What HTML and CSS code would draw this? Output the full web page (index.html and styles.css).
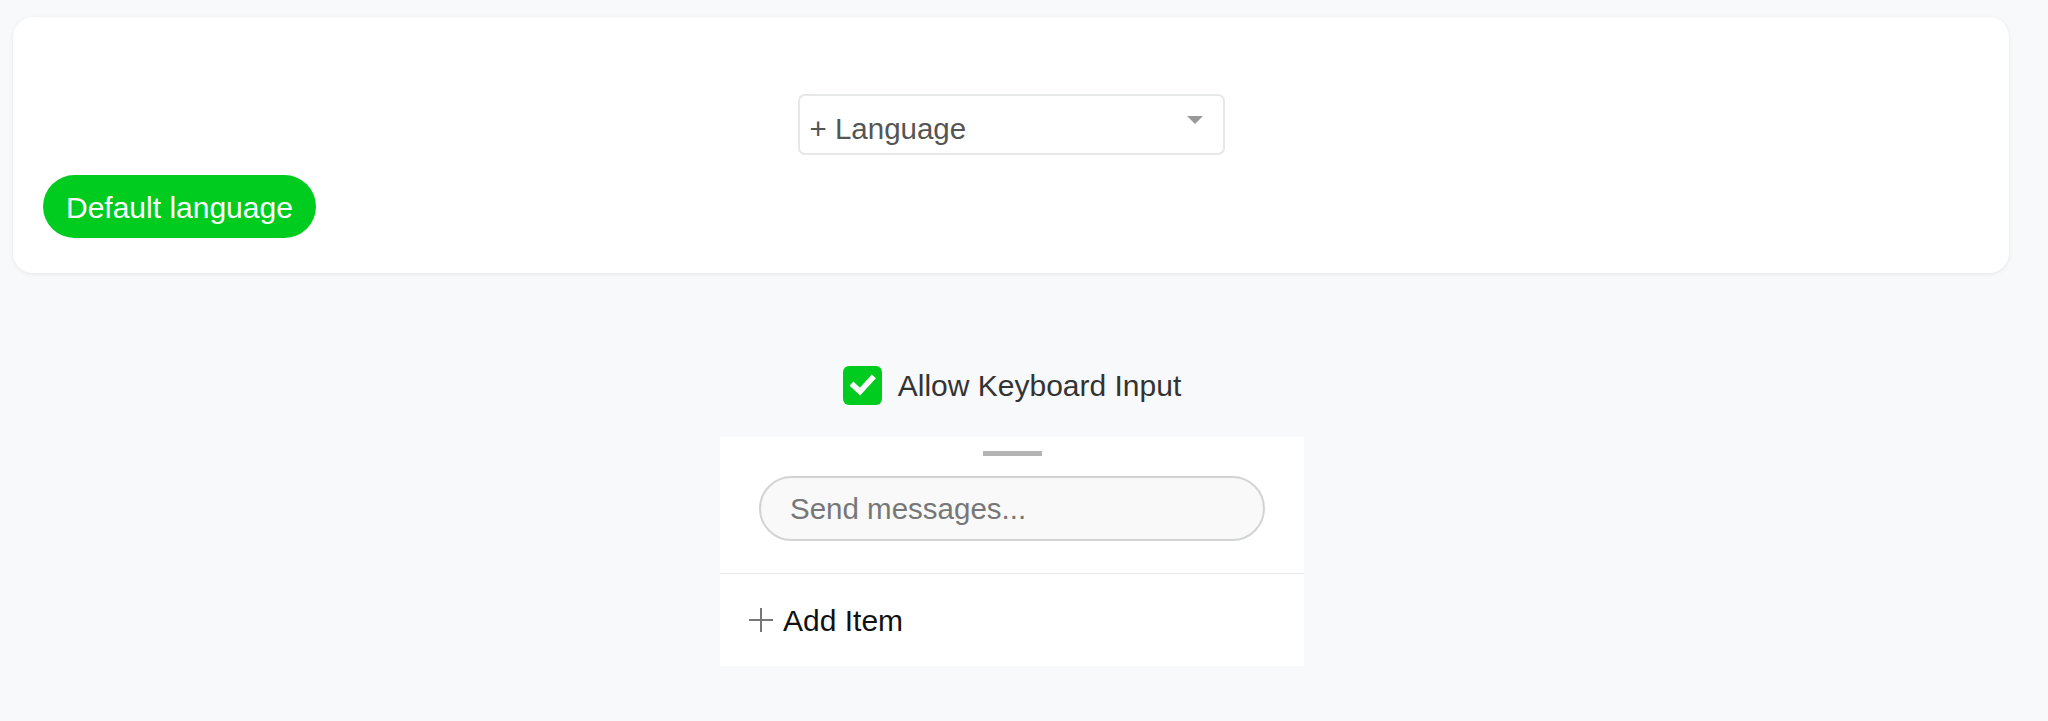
FILE: index.html
```html
<!DOCTYPE html>
<html lang="en">
<head>
<meta charset="utf-8">
<title>Language settings</title>
<link rel="stylesheet" href="styles.css">
</head>
<body>
<div class="page">
  <section class="card">
    <div class="select-row">
      <div class="select">
        <span class="select-text">+ Language</span>
        <span class="select-arrow"></span>
      </div>
    </div>
    <button class="default-btn" type="button">Default language</button>
  </section>

  <label class="check-row">
    <span class="checkbox">
      <svg width="39" height="39" viewBox="0 0 39 39" aria-hidden="true">
        <polyline points="10.5,19.5 17,25.5 29,12.5" fill="none" stroke="#fff" stroke-width="5.5" stroke-linecap="square" stroke-linejoin="miter"/>
      </svg>
    </span>
    <span class="check-label">Allow Keyboard Input</span>
  </label>

  <div class="panel">
    <div class="panel-top">
      <div class="handle"></div>
      <div class="msg-input">Send messages...</div>
    </div>
    <div class="add-row">
      <svg class="plus" width="24" height="24" viewBox="0 0 24 24" aria-hidden="true">
        <path d="M12 0V24M0 12H24" stroke="#777" stroke-width="2" fill="none"/>
      </svg>
      <span class="add-text">Add Item</span>
    </div>
  </div>
</div>
</body>
</html>
```

FILE: styles.css
```css
html, body {
  margin: 0;
  padding: 0;
  background: #f8f9fa;
  font-family: "Liberation Sans", Arial, Helvetica, sans-serif;
}

.page {
  width: 1996px;
  margin-left: 13px;
  padding-top: 17px;
  display: flex;
  flex-direction: column;
}

.card {
  background: #ffffff;
  border-radius: 20px;
  box-shadow: 0 1px 4px rgba(0, 0, 0, 0.08);
  padding: 77px 30px 35px 30px;
  display: flex;
  flex-direction: column;
  align-items: flex-start;
}

.select-row {
  align-self: stretch;
  display: flex;
  justify-content: center;
}

.select {
  box-sizing: border-box;
  width: 427px;
  height: 61px;
  border: 2px solid #e6e8e8;
  border-radius: 7px;
  display: flex;
  align-items: center;
  justify-content: space-between;
  padding: 9px 20px 0 10px;
}

.select-text {
  font-size: 29.5px;
  color: #555555;
}

.select-arrow {
  width: 0;
  height: 0;
  border-left: 8.5px solid transparent;
  border-right: 8.5px solid transparent;
  border-top: 8px solid #999999;
  margin-top: -19px;
}

.default-btn {
  margin-top: 20px;
  height: 63px;
  padding: 2px 23px 0 23px;
  border: none;
  border-radius: 32px;
  background: #00cc20;
  color: #ffffff;
  font-family: inherit;
  font-size: 30px;
}

.check-row {
  margin-top: 93px;
  align-self: center;
  display: flex;
  align-items: center;
  gap: 16px;
  height: 39px;
  margin-left: 2px;
}

.checkbox {
  width: 39px;
  height: 39px;
  border-radius: 6px;
  background: #00cc20;
  display: flex;
}

.check-label {
  font-size: 30px;
  color: #333333;
}

.panel {
  margin-top: 32px;
  align-self: center;
  width: 584px;
  background: #ffffff;
  margin-left: 2px;
}

.panel-top {
  display: flex;
  flex-direction: column;
  align-items: center;
  padding: 14px 39px 32px 39px;
  border-bottom: 1px solid #e6e8e8;
}

.handle {
  width: 59px;
  height: 5px;
  background: #b4b4b4;
}

.msg-input {
  box-sizing: border-box;
  margin-top: 20px;
  align-self: stretch;
  height: 65px;
  border: 2px solid #d2d4d4;
  border-radius: 33px;
  background: #f8f9f8;
  color: #777777;
  font-size: 29.5px;
  display: flex;
  align-items: center;
  padding-left: 29px;
  padding-bottom: 0;
}

.add-row {
  height: 92px;
  display: flex;
  align-items: center;
  padding-left: 29px;
  gap: 10px;
}

.add-text {
  font-size: 30px;
  color: #111111;
  margin-top: 2px;
}
```
